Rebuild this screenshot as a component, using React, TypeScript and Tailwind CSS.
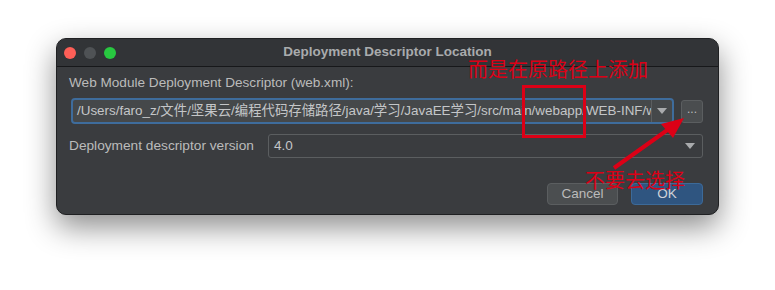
const PATH =
  "/Users/faro_z/文件/坚果云/编程代码存储路径/java/学习/JavaEE学习/src/main/webapp/WEB-INF/web.xml";

function Caret() {
  return (
    <svg width="10" height="6" viewBox="0 0 10 6" className="block">
      <path d="M0 0h10L5 6z" fill="#a9abad" />
    </svg>
  );
}

function Annotations() {
  return (
    <>
      <svg
        className="pointer-events-none absolute left-0 top-0"
        width="663"
        height="177"
        viewBox="0 0 663 177"
      >
        <rect x="466.5" y="47.5" width="61" height="50" fill="none" stroke="#dc0016" strokeWidth="3" />
        <line x1="557" y1="129" x2="616" y2="87" stroke="#dc0016" strokeWidth="4" />
        <path d="M627 79 L604 85 L616 99 Z" fill="#dc0016" />
      </svg>
      <div className="pointer-events-none absolute left-[411px] top-[21px] text-[20px] leading-[20px] text-[#dc0016]">
        而是在原路径上添加
      </div>
      <div className="pointer-events-none absolute left-[528px] top-[132px] text-[20px] leading-[20px] text-[#dc0016]">
        不要去选择
      </div>
    </>
  );
}

export default function App() {
  return (
    <div
      className="h-[290px] w-[775px] bg-white pl-[56px] pt-[38px]"
      style={{ fontFamily: '"Liberation Sans", "Noto Sans CJK SC", sans-serif' }}
    >
      <div className="relative flex h-[177px] w-[663px] flex-col overflow-hidden rounded-[10px] border border-[#1f2022] bg-[#3a3c3f] shadow-[0_12px_30px_rgba(0,0,0,0.45)]">
        {/* title bar */}
        <div className="relative flex h-[28px] shrink-0 items-center border-b border-[#17181a] bg-[#323437]">
          <div className="flex gap-[8px] pl-[7px]">
            <span className="h-[12px] w-[12px] rounded-full bg-[#fe5f57]" />
            <span className="h-[12px] w-[12px] rounded-full bg-[#4f5255]" />
            <span className="h-[12px] w-[12px] rounded-full bg-[#28c840]" />
          </div>
          <div className="absolute inset-0 flex items-center justify-center text-[13.5px] font-bold text-[#a9abad]">
            Deployment Descriptor Location
          </div>
        </div>

        {/* body */}
        <div className="flex flex-1 flex-col pl-[12px] pr-[15px] pt-[8px]">
          <div className="text-[13.6px] leading-[16px] text-[#bbbbbb]">
            Web Module Deployment Descriptor (web.xml):
          </div>
          <div className="mt-[7px] flex items-center gap-[7px] pl-[2px]">
            <div className="flex h-[26px] w-[603px] items-stretch rounded-[4px] border-2 border-[#3e6c9c] bg-[#45484a]">
              <div className="flex-1 overflow-hidden whitespace-nowrap pl-[4px] text-[13.4px] leading-[22px] text-[#c4c6c8]">
                {PATH}
              </div>
              <div className="flex w-[21px] items-center justify-center border-l border-[#5b5e60]">
                <Caret />
              </div>
            </div>
            <div className="flex h-[23px] w-[23px] items-center justify-center rounded-[3px] border border-[#5b5e60] bg-[#4a4d4f] pb-[4px] text-[12px] text-[#bbbbbb]">
              ...
            </div>
          </div>

          <div className="mt-[10px] flex items-center">
            <div className="w-[199px] text-[13.7px] text-[#bbbbbb]">Deployment descriptor version</div>
            <div className="flex h-[24px] flex-1 items-center justify-between rounded-[3px] border border-[#5b5e60] pl-[5px] pr-[7px] text-[13.5px] text-[#c4c6c8]">
              <span>4.0</span>
              <Caret />
            </div>
          </div>

          <div className="mt-[25px] flex justify-end gap-[13px]">
            <div className="flex h-[22px] w-[71px] items-center justify-center rounded-[4px] border border-[#5b5e60] bg-[#4b4e50] text-[13.5px] text-[#bbbbbb]">
              Cancel
            </div>
            <div className="flex h-[22px] w-[72px] items-center justify-center rounded-[4px] border border-[#3c6a99] bg-[#2f5580] text-[13.5px] text-[#cfd3d8]">
              OK
            </div>
          </div>
        </div>

        <Annotations />
      </div>
    </div>
  );
}
